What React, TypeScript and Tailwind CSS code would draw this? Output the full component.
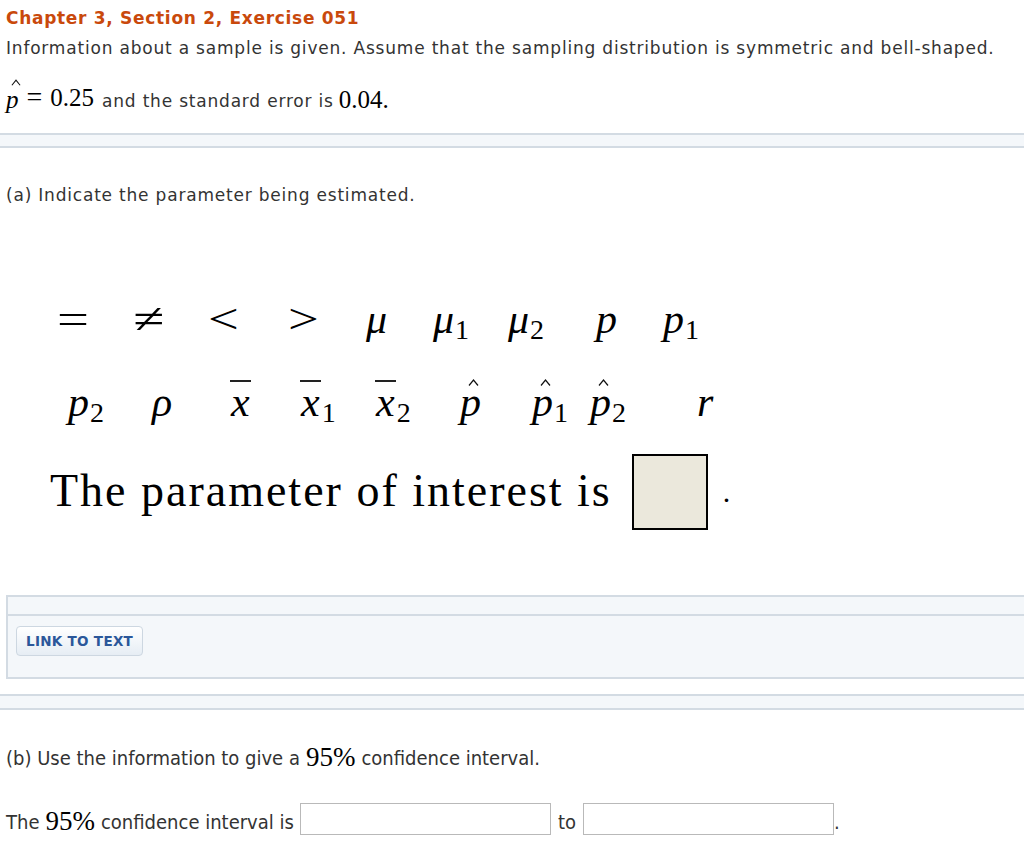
import type { ReactNode } from 'react'

const sans = { fontFamily: '"DejaVu Sans", Verdana, sans-serif' }

// ── small math helpers ─────────────────────────────────────────────
function HatMark({ w = 11, h = 7 }: { w?: number; h?: number }) {
  return (
    <svg width={w} height={h} viewBox="0 0 11 7" className="absolute left-[0.18em] top-[-0.05em]">
      <path d="M1 6.5 L5.5 1 L10 6.5" fill="none" stroke="#111" strokeWidth="1.2" />
    </svg>
  )
}

function Hat({ children, w, h }: { children: ReactNode; w?: number; h?: number }) {
  return (
    <span className="relative inline-block">
      <HatMark w={w} h={h} />
      {children}
    </span>
  )
}

function Bar({ children }: { children: ReactNode }) {
  return <span className="inline-block border-t-[2px] border-[#222] pt-[3px] leading-[0.85] px-[1px]">{children}</span>
}

function Sub({ children }: { children: ReactNode }) {
  return <span className="not-italic text-[28px] relative top-[6px] ml-[1px]">{children}</span>
}

export default function App() {
  return (
    <div className="min-h-screen bg-white text-[#333]" style={sans}>
      {/* ── Header ── */}
      <div className="px-[6px] pt-[7px]">
        <h1 className="text-[17px] font-bold text-[#c9490c] leading-[22px] tracking-[0.7px]">Chapter 3, Section 2, Exercise 051</h1>
        <p className="mt-[8px] text-[17px] leading-[22px] tracking-[0.8px]">
          Information about a sample is given. Assume that the sampling distribution is symmetric and bell-shaped.
        </p>
        <p className="mt-[25px] h-[34px] flex items-end text-[17px] tracking-[0.8px]">
          <span className="text-[25px] text-black font-['Liberation_Serif',serif] italic mr-[8px] tracking-normal">
            <Hat w={10} h={7}>p</Hat>
          </span>
          <span className="text-[25px] text-black font-['Liberation_Serif',serif] mr-[8px] tracking-normal">
            <span className="mr-[8px] text-[28px]">=</span>0.25
          </span>
          <span className="mb-[4px]">and the standard error is</span>
          <span className="text-[25px] text-black font-['Liberation_Serif',serif] ml-[5px] tracking-normal">0.04.</span>
        </p>
      </div>

      <div className="mt-[15px] h-[15px] border-y-2 border-[#d3dbe3] bg-[#f4f7fa]" />

      {/* ── Part (a) ── */}
      <p className="px-[6px] mt-[36px] text-[17px] leading-[22px] tracking-[0.8px]">(a) Indicate the parameter being estimated.</p>

      <div className="mt-[92px] font-['Liberation_Serif',serif] text-black text-[42px] leading-none">
        <div className="flex items-baseline h-[46px] pl-[57px]">
          <span className="w-[76px] scale-x-[1.35] origin-left">=</span>
          <span className="w-[75px] scale-x-[1.35] origin-left">≠</span>
          <span className="w-[80px] scale-x-[1.3] origin-left">&lt;</span>
          <span className="w-[78px] scale-x-[1.3] origin-left">&gt;</span>
          <span className="w-[67px] italic">μ</span>
          <span className="w-[75px] italic">μ<Sub>1</Sub></span>
          <span className="w-[88px] italic">μ<Sub>2</Sub></span>
          <span className="w-[67px] italic">p</span>
          <span className="italic">p<Sub>1</Sub></span>
        </div>
        <div className="flex items-baseline h-[46px] mt-[36px] pl-[68px]">
          <span className="w-[84px] italic">p<Sub>2</Sub></span>
          <span className="w-[78px] italic">ρ</span>
          <span className="w-[70px] italic"><Bar>x</Bar></span>
          <span className="w-[75px] italic"><Bar>x</Bar><Sub>1</Sub></span>
          <span className="w-[85px] italic"><Bar>x</Bar><Sub>2</Sub></span>
          <span className="w-[72px] italic"><Hat>p</Hat></span>
          <span className="w-[58px] italic"><Hat>p</Hat><Sub>1</Sub></span>
          <span className="w-[107px] italic"><Hat>p</Hat><Sub>2</Sub></span>
          <span className="italic">r</span>
        </div>
      </div>

      <div className="mt-[28px] flex items-center pl-[50px] font-['Liberation_Serif',serif] text-black">
        <span className="text-[46px] leading-none mt-[-2px] tracking-[2px]">The parameter of interest is</span>
        <span className="ml-[20px] h-[76px] w-[76px] border-[2px] border-black bg-[#ebe8dc]" />
        <span className="ml-[15px] text-[30px] leading-none">.</span>
      </div>

      {/* ── Link-to-text panel ── */}
      <div className="mt-[65px] ml-[6px] border-2 border-r-0 border-[#d3dbe3] bg-[#f4f7fa]">
        <div className="h-[19px] border-b-2 border-[#d3dbe3]" />
        <div className="pl-[8px] pt-[10px] pb-[21px]">
          <button className="h-[30px] rounded-[4px] border border-[#cdd7e1] bg-gradient-to-b from-white to-[#e6edf4] px-[9px] text-[13.5px] font-bold text-[#2b579a] tracking-[0.3px]">
            LINK TO TEXT
          </button>
        </div>
      </div>

      <div className="mt-[15px] h-[16px] border-y-2 border-[#d3dbe3] bg-[#f4f7fa]" />

      {/* ── Part (b) ── */}
      <p className="px-[6px] mt-[34px] text-[20px] leading-[26px] font-stretch-condensed flex items-end">
        (b) Use the information to give a
        <span className="mx-[6px] text-[27px] text-black font-['Liberation_Serif',serif] font-stretch-normal leading-none">95%</span>
        confidence interval.
      </p>

      <div className="px-[6px] mt-[32px] flex items-end text-[20px] leading-[26px] font-stretch-condensed">
        <span>The</span>
        <span className="mx-[6px] text-[27px] leading-none text-black font-['Liberation_Serif',serif] font-stretch-normal">95%</span>
        <span>confidence interval is</span>
        <input className="ml-[6px] h-[32px] w-[251px] border border-[#b9b9b9] bg-white" />
        <span className="mx-[7px]">to</span>
        <input className="h-[32px] w-[251px] border border-[#b9b9b9] bg-white" />
        <span>.</span>
      </div>
    </div>
  )
}
